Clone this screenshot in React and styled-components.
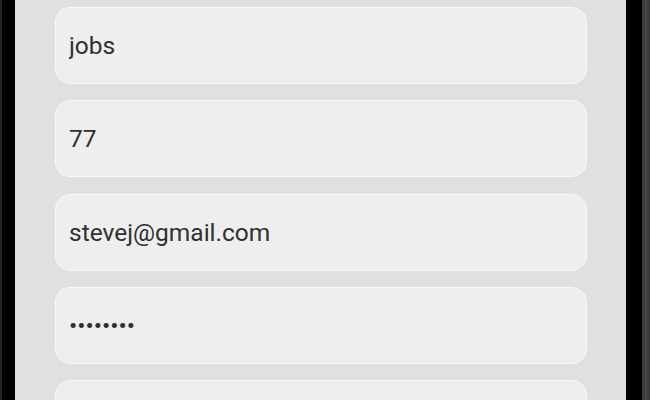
import styled, { createGlobalStyle } from 'styled-components';

const GlobalStyle = createGlobalStyle`
	html, body {
		margin: 0;
		padding: 0;
		overflow: hidden;
		background: #000;
	}
`;

const Device = styled.div`
	display: flex;
	width: 650px;
	height: 400px;
	overflow: hidden;
`;

const LeftBezel = styled.div`
	width: 15px;
	flex-shrink: 0;
	background: #000;
	border-left: 2px solid #262626;
	box-sizing: border-box;
`;

const RightBezel = styled.div`
	width: 24px;
	flex-shrink: 0;
	background: linear-gradient(
		to right,
		#000 0px,
		#000 16px,
		#3c3c3c 16px,
		#3c3c3c 19px,
		#4a4a4a 19px,
		#4a4a4a 21px,
		#3a3a3a 21px
	);
`;

const Screen = styled.div`
	flex: 1;
	background: #e0e0e0;
	padding: 7px 0 0 40px;
	display: flex;
	flex-direction: column;
	gap: 16.3px;
`;

const Field = styled.input`
	width: 532px;
	height: 77px;
	flex-shrink: 0;
	box-sizing: border-box;
	border: 1.5px solid #f8f8f8;
	border-radius: 15px;
	background: #eeeeee;
	padding: 0 13px;
	font-family: Roboto, 'Noto Sans', sans-serif;
	font-size: 24.5px;
	color: #303030;
	outline: none;
`;

const fields = [
	{ id: 'lastName', type: 'text', value: 'jobs' },
	{ id: 'age', type: 'text', value: '77' },
	{ id: 'email', type: 'email', value: 'stevej@gmail.com' },
	{ id: 'password', type: 'password', value: 'password' },
	{ id: 'confirm', type: 'text', value: '' },
];

export default function App() {
	return (
		<>
			<GlobalStyle />
			<Device>
				<LeftBezel />
				<Screen>
					{fields.map(({ id, type, value }) => (
						<Field key={id} type={type} defaultValue={value} readOnly />
					))}
				</Screen>
				<RightBezel />
			</Device>
		</>
	);
}
